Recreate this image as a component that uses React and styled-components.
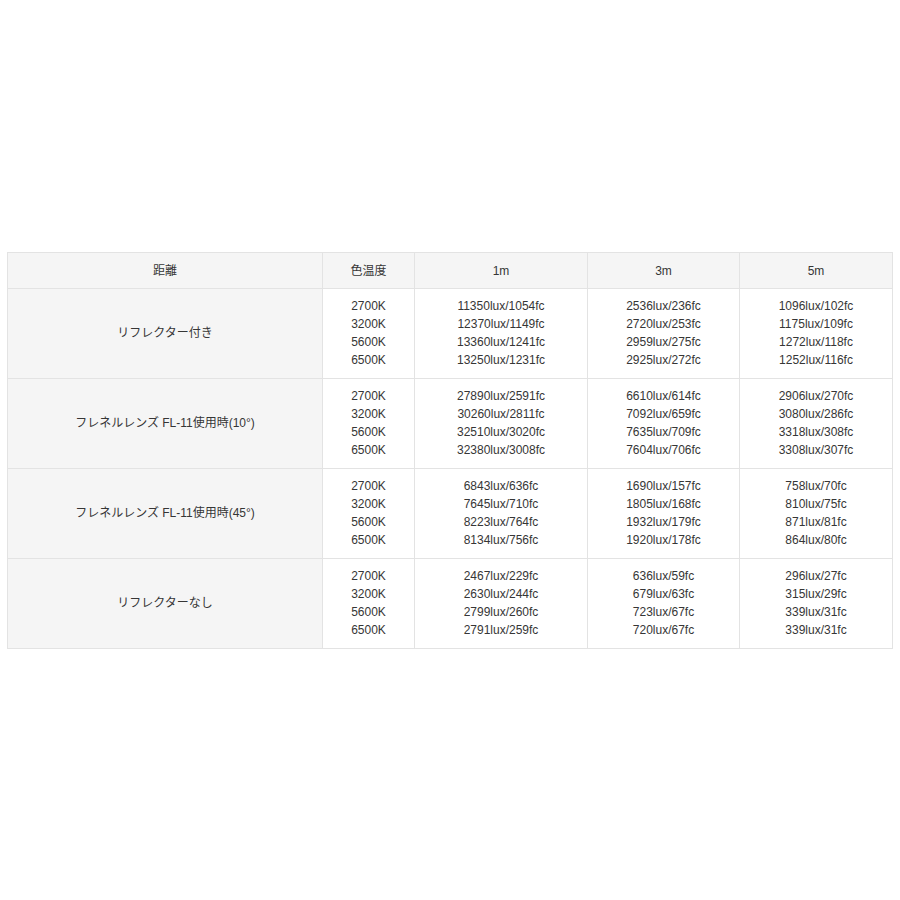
import React from 'react';
import styled, { createGlobalStyle } from 'styled-components';

const GlobalStyle = createGlobalStyle`
  html, body {
    margin: 0;
    padding: 0;
    background: #fff;
  }
  body {
    font-family: "Liberation Sans", Arial, "Noto Sans CJK JP", sans-serif;
    color: #363636;
  }
`;

const Page = styled.div`
  padding: 252px 8px 0 7px;
`;

const Table = styled.table`
  width: 885px;
  border-collapse: collapse;
  table-layout: fixed;
  font-size: 12px;
  line-height: 18px;
`;

const HeadCell = styled.th`
  height: 35px;
  padding: 0;
  font-weight: normal;
  text-align: center;
  background: #f5f5f5;
  border: 1px solid #e3e3e3;
`;

const LabelCell = styled.td`
  padding: 8px 4px 9px;
  text-align: center;
  vertical-align: middle;
  background: #f5f5f5;
  border: 1px solid #e3e3e3;
`;

const ValueCell = styled.td`
  padding: 8px 4px 9px;
  text-align: center;
  vertical-align: middle;
  background: #fff;
  border: 1px solid #e3e3e3;
`;

const Line = styled.div`
  white-space: nowrap;
`;

const temps = ['2700K', '3200K', '5600K', '6500K'];

const rows = [
  {
    label: 'リフレクター付き',
    m1: ['11350lux/1054fc', '12370lux/1149fc', '13360lux/1241fc', '13250lux/1231fc'],
    m3: ['2536lux/236fc', '2720lux/253fc', '2959lux/275fc', '2925lux/272fc'],
    m5: ['1096lux/102fc', '1175lux/109fc', '1272lux/118fc', '1252lux/116fc'],
  },
  {
    label: 'フレネルレンズ FL-11使用時(10°)',
    m1: ['27890lux/2591fc', '30260lux/2811fc', '32510lux/3020fc', '32380lux/3008fc'],
    m3: ['6610lux/614fc', '7092lux/659fc', '7635lux/709fc', '7604lux/706fc'],
    m5: ['2906lux/270fc', '3080lux/286fc', '3318lux/308fc', '3308lux/307fc'],
  },
  {
    label: 'フレネルレンズ FL-11使用時(45°)',
    m1: ['6843lux/636fc', '7645lux/710fc', '8223lux/764fc', '8134lux/756fc'],
    m3: ['1690lux/157fc', '1805lux/168fc', '1932lux/179fc', '1920lux/178fc'],
    m5: ['758lux/70fc', '810lux/75fc', '871lux/81fc', '864lux/80fc'],
  },
  {
    label: 'リフレクターなし',
    m1: ['2467lux/229fc', '2630lux/244fc', '2799lux/260fc', '2791lux/259fc'],
    m3: ['636lux/59fc', '679lux/63fc', '723lux/67fc', '720lux/67fc'],
    m5: ['296lux/27fc', '315lux/29fc', '339lux/31fc', '339lux/31fc'],
  },
];

const Lines = ({ items }) => items.map((t, i) => <Line key={i}>{t}</Line>);

export default function App() {
  return (
    <>
      <GlobalStyle />
      <Page>
        <Table>
          <colgroup>
            <col style={{ width: 315 }} />
            <col style={{ width: 92 }} />
            <col style={{ width: 173 }} />
            <col style={{ width: 152 }} />
            <col style={{ width: 153 }} />
          </colgroup>
          <thead>
            <tr>
              <HeadCell>距離</HeadCell>
              <HeadCell>色温度</HeadCell>
              <HeadCell>1m</HeadCell>
              <HeadCell>3m</HeadCell>
              <HeadCell>5m</HeadCell>
            </tr>
          </thead>
          <tbody>
            {rows.map((r) => (
              <tr key={r.label}>
                <LabelCell>{r.label}</LabelCell>
                <ValueCell><Lines items={temps} /></ValueCell>
                <ValueCell><Lines items={r.m1} /></ValueCell>
                <ValueCell><Lines items={r.m3} /></ValueCell>
                <ValueCell><Lines items={r.m5} /></ValueCell>
              </tr>
            ))}
          </tbody>
        </Table>
      </Page>
    </>
  );
}
